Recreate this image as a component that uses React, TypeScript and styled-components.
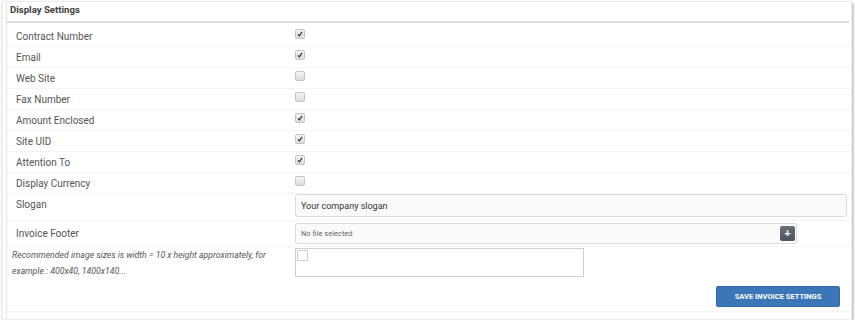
import React, { useState } from 'react';
import styled, { createGlobalStyle } from 'styled-components';

const GlobalStyle = createGlobalStyle`
  html, body {
    margin: 0;
    padding: 0;
    background: #fff;
    font-family: Roboto, "Liberation Sans", Arial, sans-serif;
  }
`;

const Panel = styled.div`
  margin: 1px 3px 0 2px;
  height: 319px;
  box-sizing: border-box;
  border: 1px solid #ececec;
  box-shadow: 1px 2px 3px rgba(0, 0, 0, 0.35);
  background: #fff;
  padding: 0 2px 0 3px;
`;

const Inner = styled.div`
  border-left: 1px solid #e2e2e2;
  height: 100%;
`;

const Header = styled.div`
  height: 17px;
  padding: 2px 0 0 3px;
  font-size: 9.6px;
  font-weight: 700;
  color: #3d3d3d;
  border-bottom: 2px solid #dedede;
  box-sizing: content-box;
`;

const Body = styled.div`
  padding-top: 3px;
`;

const Row = styled.div<{ h: number; align?: string; last?: boolean }>`
  display: flex;
  align-items: ${({ align }) => align || 'center'};
  height: ${({ h }) => h}px;
  border-bottom: ${({ last }) => (last ? 'none' : '1px dotted #ececec')};
  box-sizing: border-box;
`;

const Label = styled.div<{ pt?: number }>`
  width: 288px;
  padding-left: 9px;
  box-sizing: border-box;
  font-size: 10px;
  color: #555;
  padding-top: ${({ pt }) => pt || 0}px;
`;

const Value = styled.div`
  flex: 1;
  display: flex;
  align-items: center;
  padding-right: 2px;
`;

const Check = styled.span<{ on: boolean }>`
  width: 8px;
  height: 8px;
  margin-top: -4px;
  border: 1px solid #c4c4c4;
  border-radius: 2px;
  background: linear-gradient(#f4f4f4, #dcdcdc);
  display: inline-flex;
  align-items: center;
  justify-content: center;
  cursor: pointer;
`;

const TextInput = styled.input`
  width: 552px;
  height: 23px;
  box-sizing: border-box;
  border: 1px solid #dcdcdc;
  border-radius: 3px;
  background: #fafafa;
  padding: 0 5px;
  font-family: Roboto, "Liberation Sans", Arial, sans-serif;
  font-size: 9px;
  color: #333;
  margin-top: 0;
`;

const FileBox = styled.div`
  width: 502px;
  height: 21px;
  box-sizing: border-box;
  border: 1px solid #dcdcdc;
  border-radius: 2px;
  background: #fafafa;
  display: flex;
  align-items: center;
  justify-content: space-between;
  padding: 0 1px 0 5px;
  font-size: 7.5px;
  color: #666;
`;

const PlusButton = styled.button`
  width: 15px;
  height: 15px;
  padding: 0;
  border: none;
  border-radius: 2px;
  background: linear-gradient(#6a7079, #4d535b);
  color: #fff;
  font-size: 11px;
  font-weight: 700;
  line-height: 15px;
  cursor: pointer;
`;

const Note = styled.div`
  width: 288px;
  padding: 0 20px 0 5px;
  box-sizing: border-box;
  font-size: 8.7px;
  font-style: italic;
  color: #555;
  line-height: 16px;
`;

const ImageBox = styled.div`
  width: 289px;
  height: 29px;
  box-sizing: border-box;
  border: 1px solid #cfcfcf;
  margin-top: 1px;
  padding: 1px 0 0 1px;
`;

const Thumb = styled.div`
  width: 11px;
  height: 11px;
  box-sizing: border-box;
  border: 1px solid #cfcfcf;
`;

const Footer = styled.div`
  display: flex;
  justify-content: flex-end;
  padding: 5px 9px 0 0;
  height: 31px;
  box-sizing: border-box;
  border-bottom: 1px dotted #ececec;
`;

const SaveButton = styled.button`
  width: 124px;
  height: 21px;
  border: 1px solid #346aa6;
  border-radius: 2px;
  background: #3b77b8;
  color: #fff;
  font-family: Roboto, "Liberation Sans", Arial, sans-serif;
  font-size: 7.5px;
  font-weight: 700;
  cursor: pointer;
`;

const CheckMark = () => (
  <svg width="6" height="6" viewBox="0 0 10 10">
    <path d="M1.5 5.5 L4 8 L8.5 1.5" fill="none" stroke="#333" strokeWidth="2" />
  </svg>
);

const initial = [
  { label: 'Contract Number', on: true },
  { label: 'Email', on: true },
  { label: 'Web Site', on: false },
  { label: 'Fax Number', on: false },
  { label: 'Amount Enclosed', on: true },
  { label: 'Site UID', on: true },
  { label: 'Attention To', on: true },
  { label: 'Display Currency', on: false },
];

const App: React.FC = () => {
  const [options, setOptions] = useState(initial);
  const [slogan, setSlogan] = useState('Your company slogan');

  const toggle = (i: number) => {
    setOptions((prev) => prev.map((o, j) => (j === i ? { ...o, on: !o.on } : o)));
  };

  return (
    <>
      <GlobalStyle />
      <Panel>
        <Inner>
          <Header>Display Settings</Header>
          <Body>
            {options.map((o, i) => (
              <Row key={o.label} h={21}>
                <Label>{o.label}</Label>
                <Value>
                  <Check on={o.on} onClick={() => toggle(i)}>
                    {o.on && <CheckMark />}
                  </Check>
                </Value>
              </Row>
            ))}
            <Row h={27} align="flex-start">
              <Label pt={5}>Slogan</Label>
              <Value>
                <TextInput value={slogan} onChange={(e) => setSlogan(e.target.value)} />
              </Value>
            </Row>
            <Row h={26}>
              <Label>Invoice Footer</Label>
              <Value>
                <FileBox>
                  No file selected
                  <PlusButton>+</PlusButton>
                </FileBox>
              </Value>
            </Row>
            <Row h={34} align="flex-start" last>
              <Note>
                Recommended image sizes is width = 10 x height approximately, for example : 400x40, 1400x140...
              </Note>
              <ImageBox>
                <Thumb />
              </ImageBox>
            </Row>
            <Footer>
              <SaveButton>SAVE INVOICE SETTINGS</SaveButton>
            </Footer>
          </Body>
        </Inner>
      </Panel>
    </>
  );
};

export default App;
